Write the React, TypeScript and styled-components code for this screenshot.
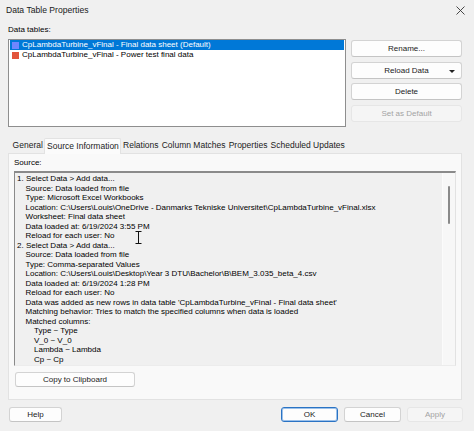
import React from 'react'
import styled, { createGlobalStyle, css } from 'styled-components'

const GlobalStyle = createGlobalStyle`
  html, body {
    margin: 0;
    padding: 0;
  }
  body {
    background: #f0f0f0;
    font-family: "Liberation Sans", Arial, sans-serif;
    font-size: 8px;
    color: #000;
  }
`

const Window = styled.div`
  position: relative;
  width: 474px;
  height: 431px;
  box-sizing: border-box;
  display: flex;
  flex-direction: column;
  background: #f0f0f0;
  overflow: hidden;
`

const TitleBar = styled.div`
  height: 20px;
  display: flex;
  align-items: center;
  justify-content: space-between;
  padding: 0 9px 0 6px;
  font-size: 8.6px;
  color: #1a1a1a;
`

const Body = styled.div`
  padding: 0 12px 0 8px;
  display: flex;
  flex-direction: column;
`

const Label = styled.div`
  padding-top: 5px;
  line-height: 10px;
  margin-bottom: 4px;
`

const TopRow = styled.div`
  display: flex;
  gap: 5px;
`

const ListBox = styled.div`
  width: 338px;
  height: 88px;
  box-sizing: border-box;
  background: #fff;
  border: 1px solid #8e8e8e;
  padding: 0 1px;
`

const ListRow = styled.div<{ $selected?: boolean }>`
  height: 10px;
  display: flex;
  align-items: center;
  gap: 3px;
  padding-left: 2px;
  line-height: 10px;
  ${({ $selected }) =>
    $selected &&
    css`
      background: #0078d7;
      color: #fff;
    `}
`

const Swatch = styled.span<{ $color: string }>`
  width: 7px;
  height: 7px;
  background: ${({ $color }) => $color};
  flex: none;
`

const ButtonColumn = styled.div`
  width: 111px;
  display: flex;
  flex-direction: column;
  gap: 4.5px;
  padding-top: 1px;
`

const Button = styled.div<{ $disabled?: boolean; $primary?: boolean; $width?: number; $short?: boolean }>`
  position: relative;
  height: ${({ $short }) => ($short ? 15 : 17)}px;
  box-sizing: border-box;
  ${({ $width }) => ($width ? `width: ${$width}px;` : '')}
  display: flex;
  align-items: center;
  justify-content: center;
  background: #fdfdfd;
  border: 1px solid #d3d3d3;
  border-bottom-color: #c4c4c4;
  border-radius: 3px;
  color: #1b1b1b;
  ${({ $disabled }) =>
    $disabled &&
    css`
      background: #f5f5f5;
      border-color: #e6e6e6;
      color: #a3a3a3;
    `}
  ${({ $primary }) =>
    $primary &&
    css`
      border: 1px solid #2a73c4;
      box-shadow: inset 0 0 0 1px #9cc1ea;
    `}
`

const DropArrow = styled.span`
  position: absolute;
  right: 6px;
  top: 7px;
  width: 0;
  height: 0;
  border-left: 3px solid transparent;
  border-right: 3px solid transparent;
  border-top: 3px solid #222;
`

const TabStrip = styled.div`
  margin-top: 10px;
  height: 16px;
  display: flex;
  align-items: flex-end;
  padding-left: 3px;
`

const Tab = styled.div<{ $active?: boolean }>`
  height: 15px;
  line-height: 15px;
  padding: 0 1.6px;
  box-sizing: border-box;
  font-size: 8.5px;
  color: #1b1b1b;
  ${({ $active }) =>
    $active &&
    css`
      height: 16px;
      line-height: 14px;
      background: #fbfbfb;
      border: 1px solid #e2e2e2;
      border-bottom: none;
      border-radius: 2px 2px 0 0;
      position: relative;
      top: 1px;
    `}
`

const Panel = styled.div`
  height: 247px;
  box-sizing: border-box;
  background: #f9f9f9;
  border: 1px solid #e2e2e2;
  padding: 0 5px;
  display: flex;
  flex-direction: column;
`

const PanelLabel = styled.div`
  padding-top: 4px;
  line-height: 10px;
  margin-bottom: 3px;
`

const TextBox = styled.div`
  height: 195px;
  box-sizing: border-box;
  display: flex;
  background: #f0f0f0;
  border-top: 2px solid #8a8a8a;
  border-left: 1px solid #8a8a8a;
  border-right: 1px solid #e2e2e2;
  border-bottom: 1px solid #ececec;
`

const TextContent = styled.div`
  flex: 1;
  overflow: hidden;
  padding: 1px 0 0 2px;
  white-space: nowrap;
`

const Line = styled.div<{ $indent?: number }>`
  line-height: 9.5px;
  height: 9.5px;
  padding-left: ${({ $indent }) => ($indent ?? 0) * 8.5}px;
`

const ScrollTrack = styled.div`
  width: 13px;
  flex: none;
  background: #f7f7f7;
  border-left: 1px solid #fbfbfb;
  padding: 13px 0 0 5px;
  box-sizing: border-box;
`

const ScrollThumb = styled.div`
  width: 2px;
  height: 38px;
  background: #8a8a8a;
  border-radius: 1px;
`

const CopyRow = styled.div`
  margin-top: 6px;
  padding-left: 1px;
`

const Footer = styled.div`
  margin-top: 7px;
  display: flex;
  justify-content: space-between;
  padding-left: 1px;
`

const FooterGroup = styled.div`
  display: flex;
  gap: 6px;
  margin-right: -1px;
`

const Cursor = styled.svg`
  position: absolute;
  left: 135px;
  top: 231px;
`

const sourceLines: [number, string][] = [
  [0, '1. Select Data > Add data...'],
  [1, 'Source: Data loaded from file'],
  [1, 'Type: Microsoft Excel Workbooks'],
  [1, 'Location: C:\\Users\\Louis\\OneDrive - Danmarks Tekniske Universitet\\CpLambdaTurbine_vFinal.xlsx'],
  [1, 'Worksheet: Final data sheet'],
  [1, 'Data loaded at: 6/19/2024 3:55 PM'],
  [1, 'Reload for each user: No'],
  [0, '2. Select Data > Add data...'],
  [1, 'Source: Data loaded from file'],
  [1, 'Type: Comma-separated Values'],
  [1, 'Location: C:\\Users\\Louis\\Desktop\\Year 3 DTU\\Bachelor\\B\\BEM_3.035_beta_4.csv'],
  [1, 'Data loaded at: 6/19/2024 1:28 PM'],
  [1, 'Reload for each user: No'],
  [1, "Data was added as new rows in data table 'CpLambdaTurbine_vFinal - Final data sheet'"],
  [1, 'Matching behavior: Tries to match the specified columns when data is loaded'],
  [1, 'Matched columns:'],
  [2, 'Type ~ Type'],
  [2, 'V_0 ~ V_0'],
  [2, 'Lambda ~ Lambda'],
  [2, 'Cp ~ Cp'],
]

const tabs = ['General', 'Source Information', 'Relations', 'Column Matches', 'Properties', 'Scheduled Updates']

export default function App() {
  return (
    <>
      <GlobalStyle />
      <Window>
        <TitleBar>
          <span>Data Table Properties</span>
          <svg width="9" height="9" viewBox="0 0 9 9">
            <path d="M0.5 0.5 L8.5 8.5 M8.5 0.5 L0.5 8.5" stroke="#333" strokeWidth="0.9" />
          </svg>
        </TitleBar>
        <Body>
          <Label>Data tables:</Label>
          <TopRow>
            <ListBox>
              <ListRow $selected>
                <Swatch $color="#6f86ff" />
                CpLambdaTurbine_vFinal - Final data sheet (Default)
              </ListRow>
              <ListRow>
                <Swatch $color="#e2553c" />
                CpLambdaTurbine_vFinal - Power test final data
              </ListRow>
            </ListBox>
            <ButtonColumn>
              <Button>Rename...</Button>
              <Button>
                Reload Data
                <DropArrow />
              </Button>
              <Button>Delete</Button>
              <Button $disabled>Set as Default</Button>
            </ButtonColumn>
          </TopRow>
          <TabStrip>
            {tabs.map((t) => (
              <Tab key={t} $active={t === 'Source Information'}>
                {t}
              </Tab>
            ))}
          </TabStrip>
          <Panel>
            <PanelLabel>Source:</PanelLabel>
            <TextBox>
              <TextContent>
                {sourceLines.map(([indent, text], i) => (
                  <Line key={i} $indent={indent}>
                    {text}
                  </Line>
                ))}
              </TextContent>
              <ScrollTrack>
                <ScrollThumb />
              </ScrollTrack>
            </TextBox>
            <CopyRow>
              <Button $width={120} $short>
                Copy to Clipboard
              </Button>
            </CopyRow>
          </Panel>
          <Footer>
            <Button $width={53} $short>
              Help
            </Button>
            <FooterGroup>
              <Button $width={57} $primary $short>
                OK
              </Button>
              <Button $width={57} $short>
                Cancel
              </Button>
              <Button $width={56} $disabled $short>
                Apply
              </Button>
            </FooterGroup>
          </Footer>
        </Body>
        <Cursor width="7" height="13" viewBox="0 0 7 13">
          <path d="M0.5 0.5 H6.5 M3.5 0.5 V12.5 M0.5 12.5 H6.5" stroke="#111" strokeWidth="1" fill="none" />
        </Cursor>
      </Window>
    </>
  )
}
